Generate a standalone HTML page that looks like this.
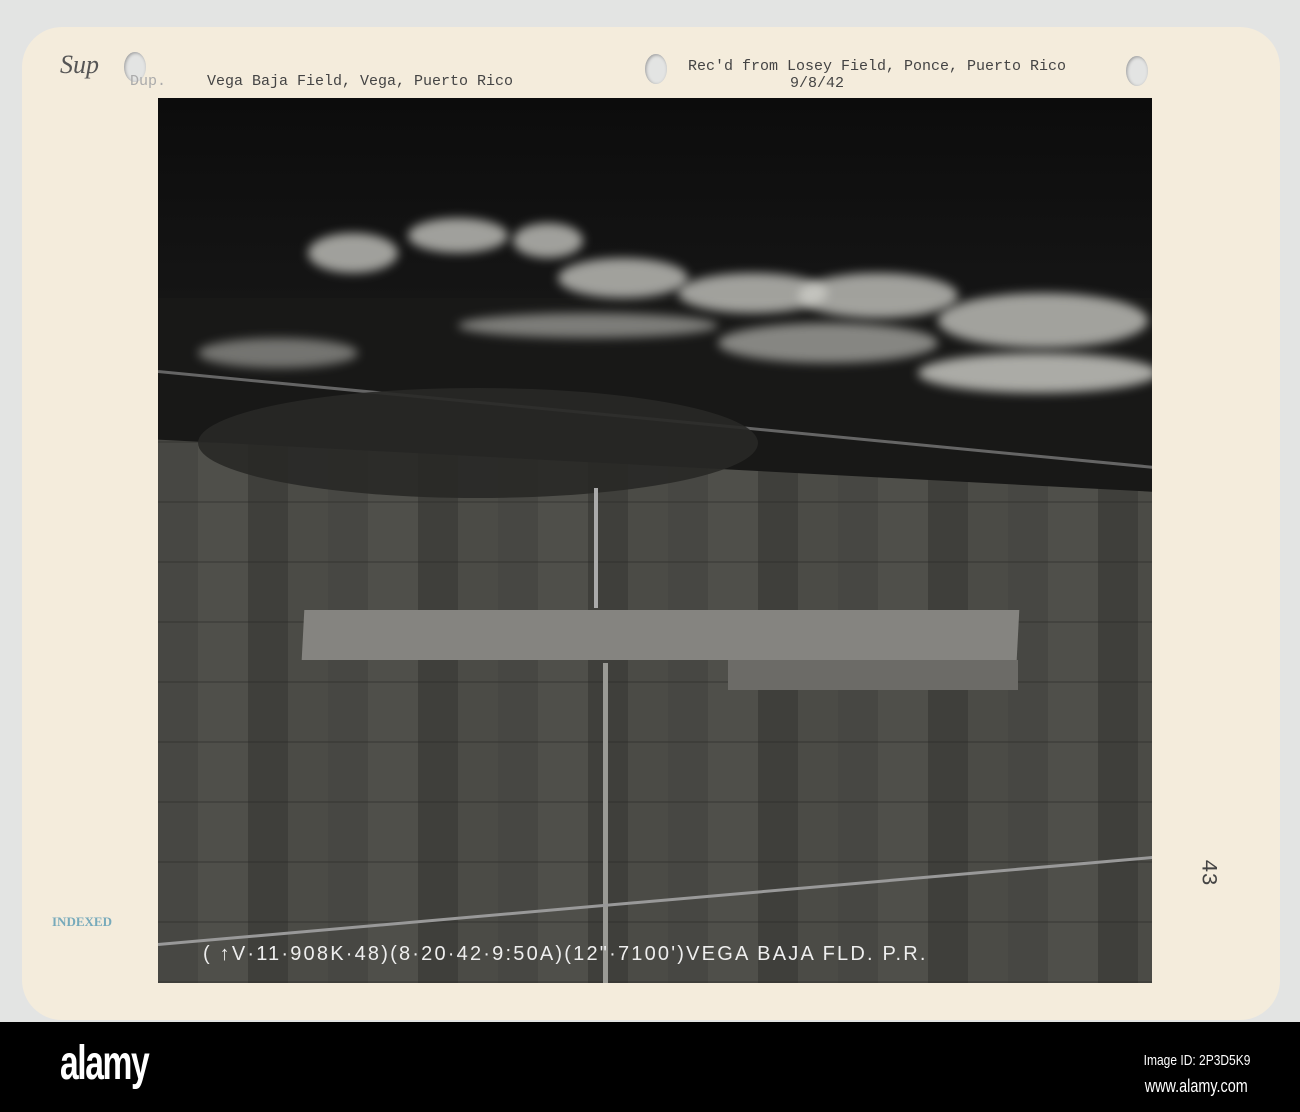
<!DOCTYPE html>
<html><head><style>
body{margin:0;width:1300px;height:1112px;background:#e3e4e3;position:relative;overflow:hidden;font-family:"Liberation Mono",monospace}
.card{position:absolute;left:22px;top:27px;width:1258px;height:993px;background:#f4ecdc;border-radius:40px}
.hole{position:absolute;width:22px;height:30px;border-radius:50%;background:#e3e4e3;box-shadow:inset 1px 1px 3px #999}
.photo{position:absolute;left:158px;top:98px;width:994px;height:885px;background:#464642;overflow:hidden}
.t{position:absolute;color:#444;font-size:15px;white-space:nowrap}
.w{position:absolute;background:#d0d0ca;border-radius:50%;filter:blur(5px);opacity:.75}
.bar{position:absolute;left:0;top:1022px;width:1300px;height:90px;background:#000;color:#fff;font-family:"Liberation Sans",sans-serif}
</style></head><body>
<div class="card"></div>
<div class="hole" style="left:124px;top:52px"></div>
<div class="hole" style="left:645px;top:54px"></div>
<div class="hole" style="left:1126px;top:56px"></div>
<div class="t" style="left:60px;top:50px;font-family:'Liberation Serif',serif;font-style:italic;font-size:26px;color:#555">Sup</div>
<div class="t" style="left:130px;top:73px;color:#aaa">Dup.</div>
<div class="t" style="left:207px;top:73px">Vega Baja Field, Vega, Puerto Rico</div>
<div class="t" style="left:688px;top:58px">Rec'd from Losey Field, Ponce, Puerto Rico</div>
<div class="t" style="left:790px;top:75px">9/8/42</div>
<div class="t" style="left:1195px;top:860px;font-size:22px;transform:rotate(90deg)">43</div>
<div class="t" style="left:52px;top:914px;color:#7ab;font-family:'Liberation Serif',serif;font-weight:bold;font-size:13px">INDEXED</div>
<div class="photo">
 <div style="position:absolute;left:0;top:0;width:100%;height:100%;background:repeating-linear-gradient(90deg,#474743 0 40px,#4f4f4a 40px 90px,#3f3f3b 90px 130px,#4b4b46 130px 170px)"></div>
 <div style="position:absolute;left:0;top:0;width:100%;height:100%;background:repeating-linear-gradient(0deg,rgba(40,40,38,.3) 0 2px,transparent 2px 60px)"></div>
 <div style="position:absolute;left:-20px;top:-60px;width:1100px;height:400px;background:#181817;transform:rotate(3deg);transform-origin:left top"></div>
 <div style="position:absolute;left:0;top:0;width:100%;height:200px;background:linear-gradient(#0c0c0c,#151515)"></div>
 <div class="w" style="left:150px;top:135px;width:90px;height:40px"></div>
 <div class="w" style="left:250px;top:120px;width:100px;height:35px"></div>
 <div class="w" style="left:355px;top:125px;width:70px;height:35px"></div>
 <div class="w" style="left:400px;top:160px;width:130px;height:40px"></div>
 <div class="w" style="left:520px;top:175px;width:150px;height:40px"></div>
 <div class="w" style="left:640px;top:175px;width:160px;height:45px"></div>
 <div class="w" style="left:780px;top:195px;width:210px;height:55px"></div>
 <div class="w" style="left:300px;top:215px;width:260px;height:25px;opacity:.55"></div>
 <div class="w" style="left:560px;top:225px;width:220px;height:40px;opacity:.6"></div>
 <div class="w" style="left:760px;top:255px;width:240px;height:40px;opacity:.8"></div>
 <div class="w" style="left:40px;top:240px;width:160px;height:30px;opacity:.5"></div>
 <div style="position:absolute;left:0;top:272px;width:1000px;height:3px;background:#999;transform:rotate(5.5deg);transform-origin:left;opacity:.6"></div>
 <div style="position:absolute;left:40px;top:290px;width:560px;height:110px;background:#282826;border-radius:50%;opacity:.9"></div>
 <div style="position:absolute;left:145px;top:512px;width:715px;height:50px;background:#858480;transform:skew(-3deg)"></div>
 <div style="position:absolute;left:570px;top:562px;width:290px;height:30px;background:#6c6b67"></div>
 <div style="position:absolute;left:436px;top:390px;width:4px;height:120px;background:#aaa"></div>
 <div style="position:absolute;left:445px;top:565px;width:5px;height:320px;background:#9a9a95"></div>
 <div style="position:absolute;left:0;top:845px;width:1000px;height:3px;background:#999;transform:rotate(-5deg);transform-origin:left"></div>
 <div style="position:absolute;left:45px;top:845px;color:#eee;font-family:'Liberation Sans',sans-serif;font-size:20px;letter-spacing:2.2px">( ↑V·11·908K·48)(8·20·42·9:50A)(12"·7100')VEGA BAJA FLD. P.R.</div>
</div>
<div class="bar">
 <div style="position:absolute;left:60px;top:14px;font-size:48px;font-weight:bold;letter-spacing:-2px;transform:scaleX(.7);transform-origin:left">alamy</div>
 <div style="position:absolute;right:50px;top:30px;font-size:15px;transform:scaleX(.8);transform-origin:right">Image ID: 2P3D5K9</div>
 <div style="position:absolute;right:52px;top:54px;font-size:18px;transform:scaleX(.8);transform-origin:right">www.alamy.com</div>
</div>
</body></html>
